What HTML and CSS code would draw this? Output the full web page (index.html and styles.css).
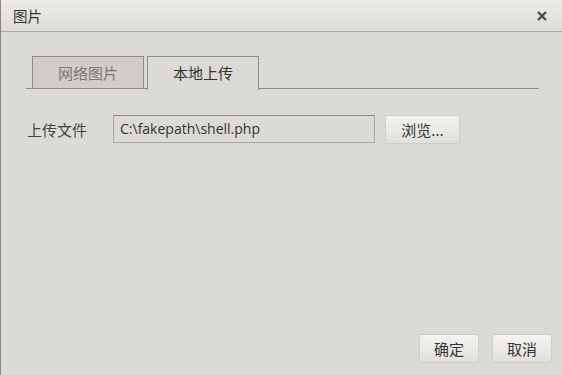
FILE: index.html
```html
<!DOCTYPE html>
<html>
<head>
<meta charset="utf-8">
<link rel="stylesheet" href="styles.css">
</head>
<body>
<div class="dialog">
  <div class="header">
    <span class="title">图片</span>
    <span class="close"><svg width="10" height="10" viewBox="0 0 10 10"><path d="M1 1L9 9M9 1L1 9" stroke="#4a4a4a" stroke-width="2.4" stroke-linecap="butt"/></svg></span>
  </div>
  <div class="content">
    <div class="tabs">
      <div class="tab">网络图片</div>
      <div class="tab active">本地上传</div>
    </div>
    <div class="row">
      <span class="label">上传文件</span>
      <div class="input">C:\fakepath\shell.php</div>
      <button class="btn browse">浏览...</button>
    </div>
  </div>
  <div class="footer">
    <button class="btn action">确定</button>
    <button class="btn action">取消</button>
  </div>
</div>
</body>
</html>
```
FILE: styles.css
```css
* { box-sizing: border-box; }
html, body { margin: 0; padding: 0; }
body {
  width: 562px;
  height: 375px;
  overflow: hidden;
  font-family: "Noto Sans CJK SC", "Noto Sans", sans-serif;
  font-size: 14px;
  color: #333;
  background: #dcdad5;
}
.dialog {
  width: 562px;
  height: 375px;
  border-left: 1px solid #8c8680;
  background: #dcdad5;
  display: flex;
  flex-direction: column;
}
.header {
  height: 32px;
  flex: none;
  border-bottom: 1px solid #aaa59f;
  background: linear-gradient(#ecebe7, #dedcd7);
  display: flex;
  align-items: center;
  justify-content: space-between;
  padding: 0 15px 0 12px;
}
.title {
  font-size: 14.5px;
  color: #333;
  line-height: 20px;
}
.close {
  display: flex;
  margin-top: 1px;
}
.content {
  padding: 24px 23px 0 25px;
}
.tabs {
  display: flex;
  gap: 3px;
  padding-left: 6px;
  height: 33px;
  border-bottom: 1px solid #918c86;
}
.tab {
  width: 112px;
  height: 33px;
  border: 1px solid #918c86;
  background: #d1cec9;
  color: #777;
  display: flex;
  align-items: center;
  justify-content: center;
  font-size: 15px;
  padding-bottom: 1px;
}
.tab.active {
  background: #dcdad5;
  color: #333;
  border-bottom: none;
  height: 34px;
  padding-bottom: 2px;
}
.row {
  display: flex;
  align-items: center;
  margin-top: 25px;
}
.label {
  width: 87px;
  padding-left: 1px;
  color: #444;
  font-size: 15px;
}
.input {
  width: 262px;
  height: 28px;
  border: 1px solid #aaa69f;
  border-top-color: #8f8a84;
  background: #dcdad5;
  padding-left: 6px;
  line-height: 26px;
  color: #333;
  font-family: "Open Sans", "Noto Sans", sans-serif;
  font-size: 14px;
}
.btn {
  font-family: "Noto Sans CJK SC", "Noto Sans", sans-serif;
  font-size: 15px;
  color: #333;
  border: 1px solid #d0cdc8;
  border-radius: 2px;
  background: linear-gradient(#f4f3f1, #e2e0dc);
  padding: 0;
  cursor: default;
}
.browse {
  margin-left: 10px;
  width: 75px;
  height: 29px;
  margin-top: 1px;
}
.footer {
  margin-top: auto;
  display: flex;
  justify-content: flex-end;
  gap: 13px;
  padding: 0 10px 12px 0;
}
.action {
  width: 60px;
  height: 29px;
}
```
